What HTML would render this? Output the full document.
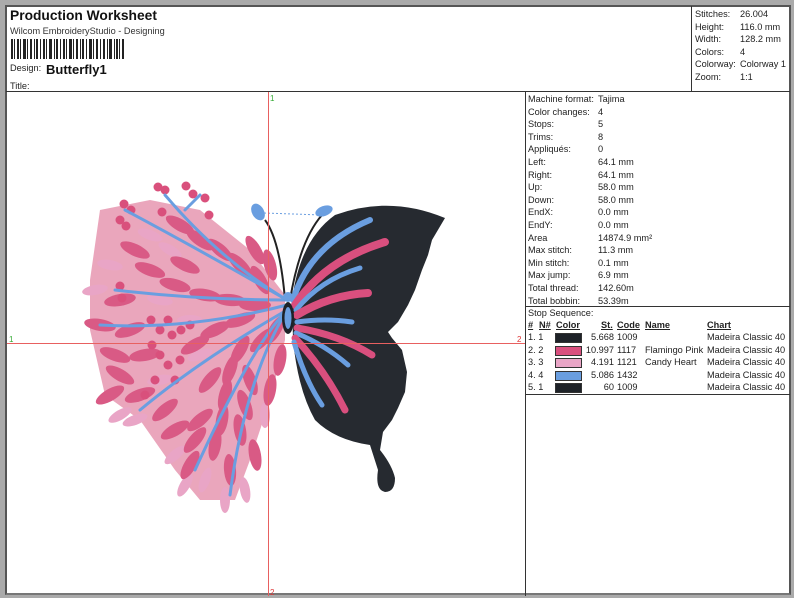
<!DOCTYPE html>
<html><head><meta charset="utf-8"><style>
*{margin:0;padding:0;box-sizing:border-box}
body{width:794px;height:598px;background:#aaa;position:relative;overflow:hidden;font-family:"Liberation Sans",Arial,sans-serif;color:#222}
.page{position:absolute;left:5px;top:5px;width:786px;height:590px;background:#fff;border:2px solid #555;border-bottom:2px solid #777}
.a{position:absolute;white-space:nowrap}
.s{font-size:9.2px;line-height:12.6px}
.ln{position:absolute;background:#333}
</style></head><body>
<div class="page"></div>
<div class="a" style="left:10px;top:8px;font-size:13.8px;font-weight:bold;color:#111">Production Worksheet</div>
<div class="a s" style="left:10px;top:25px;color:#333">Wilcom EmbroideryStudio - Designing</div>
<svg class="a" style="left:11px;top:39px" width="118" height="20">
<g fill="#222">
<rect x="0" width="2" height="20"/><rect x="3" width="1" height="20"/><rect x="6" width="2" height="20"/><rect x="9" width="1" height="20"/><rect x="12" width="3" height="20"/><rect x="16" width="1" height="20"/><rect x="19" width="2" height="20"/><rect x="23" width="1" height="20"/><rect x="25" width="2" height="20"/><rect x="29" width="1" height="20"/><rect x="32" width="2" height="20"/><rect x="35" width="1" height="20"/><rect x="38" width="3" height="20"/><rect x="43" width="1" height="20"/><rect x="45" width="2" height="20"/><rect x="49" width="1" height="20"/><rect x="52" width="2" height="20"/><rect x="55" width="1" height="20"/><rect x="58" width="3" height="20"/><rect x="62" width="1" height="20"/><rect x="65" width="2" height="20"/><rect x="69" width="1" height="20"/><rect x="71" width="2" height="20"/><rect x="75" width="1" height="20"/><rect x="78" width="3" height="20"/><rect x="82" width="1" height="20"/><rect x="85" width="2" height="20"/><rect x="89" width="1" height="20"/><rect x="92" width="2" height="20"/><rect x="96" width="1" height="20"/><rect x="98" width="3" height="20"/><rect x="103" width="1" height="20"/><rect x="105" width="2" height="20"/><rect x="108" width="1" height="20"/><rect x="111" width="2" height="20"/></g></svg>
<div class="a s" style="left:10px;top:62px">Design:</div>
<div class="a" style="left:46px;top:62px;font-size:13px;font-weight:bold;color:#111">Butterfly1</div>
<div class="a s" style="left:10px;top:80px">Title:</div>
<div class="ln" style="left:6px;top:91px;width:784px;height:1px"></div>
<div class="ln" style="left:691px;top:6px;width:1px;height:86px"></div>
<div class="ln" style="left:525px;top:92px;width:1px;height:504px"></div>
<div class="ln" style="left:525px;top:306px;width:265px;height:1px"></div>
<div class="ln" style="left:525px;top:394px;width:265px;height:1px"></div>
<div class="a s" style="left:695px;top:8px">Stitches:<br>Height:<br>Width:<br>Colors:<br>Colorway:<br>Zoom:</div>
<div class="a s" style="left:740px;top:8px">26.004<br>116.0 mm<br>128.2 mm<br>4<br>Colorway 1<br>1:1</div>
<div class="a s" style="left:528px;top:93px">Machine format:<br>Color changes:<br>Stops:<br>Trims:<br>Appliqués:<br>Left:<br>Right:<br>Up:<br>Down:<br>EndX:<br>EndY:<br>Area<br>Max stitch:<br>Min stitch:<br>Max jump:<br>Total thread:<br>Total bobbin:</div>
<div class="a s" style="left:598px;top:93px">Tajima<br>4<br>5<br>8<br>0<br>64.1 mm<br>64.1 mm<br>58.0 mm<br>58.0 mm<br>0.0 mm<br>0.0 mm<br>14874.9 mm²<br>11.3 mm<br>0.1 mm<br>6.9 mm<br>142.60m<br>53.39m</div>
<div class="a s" style="left:528px;top:307px">Stop Sequence:</div>
<div class="a s" style="left:528px;top:319px;font-weight:bold;text-decoration:underline">#</div>
<div class="a s" style="left:539px;top:319px;font-weight:bold;text-decoration:underline">N#</div>
<div class="a s" style="left:556px;top:319px;font-weight:bold;text-decoration:underline">Color</div>
<div class="a s" style="left:601px;top:319px;font-weight:bold;text-decoration:underline">St.</div>
<div class="a s" style="left:617px;top:319px;font-weight:bold;text-decoration:underline">Code</div>
<div class="a s" style="left:645px;top:319px;font-weight:bold;text-decoration:underline">Name</div>
<div class="a s" style="left:707px;top:319px;font-weight:bold;text-decoration:underline">Chart</div>
<div class="a s" style="left:528px;top:331px">1. 1<br>2. 2<br>3. 3<br>4. 4<br>5. 1</div>
<div class="a" style="left:555px;top:333px;width:27px;height:10px;background:#1e2228;border:1px solid #333"></div>
<div class="a" style="left:555px;top:346px;width:27px;height:10px;background:#d94f7e;border:1px solid #333"></div>
<div class="a" style="left:555px;top:358px;width:27px;height:10px;background:#e9a5c6;border:1px solid #333"></div>
<div class="a" style="left:555px;top:371px;width:27px;height:10px;background:#6a9ee0;border:1px solid #333"></div>
<div class="a" style="left:555px;top:383px;width:27px;height:10px;background:#1e2228;border:1px solid #333"></div>
<div class="a s" style="left:583px;top:331px;width:31px;text-align:right">5.668<br>10.997<br>4.191<br>5.086<br>60</div>
<div class="a s" style="left:617px;top:331px">1009<br>1117<br>1121<br>1432<br>1009</div>
<div class="a s" style="left:645px;top:331px"><br>Flamingo Pink<br>Candy Heart</div>
<div class="a s" style="left:707px;top:331px">Madeira Classic 40<br>Madeira Classic 40<br>Madeira Classic 40<br>Madeira Classic 40<br>Madeira Classic 40</div>

<svg class="a" style="left:0;top:0" width="794" height="598">
<defs>
<ellipse id="lf" cx="0" cy="0" rx="16" ry="6"/>
<ellipse id="ls" cx="0" cy="0" rx="13" ry="5"/>
</defs>
<path fill="#dc6a90" opacity="0.6" d="M100 210 L150 200 L200 210 L250 250 L285 295 L285 340 L270 400 L250 460 L235 500 L200 500 L175 470 L140 420 L105 395 L90 330 L90 280 Z"/>
<g fill="#e9a5c6">
<use href="#ls" transform="translate(150,235) rotate(20)"/><use href="#ls" transform="translate(110,265) rotate(10)"/><use href="#ls" transform="translate(95,290) rotate(-10)"/><use href="#ls" transform="translate(170,250) rotate(30)"/>
<use href="#ls" transform="translate(200,355) rotate(-20)"/><use href="#ls" transform="translate(120,415) rotate(-30)"/><use href="#ls" transform="translate(160,380) rotate(-10)"/>
<use href="#ls" transform="translate(205,480) rotate(-70)"/><use href="#ls" transform="translate(185,485) rotate(-60)"/><use href="#ls" transform="translate(245,490) rotate(-100)"/><use href="#ls" transform="translate(225,500) rotate(-90)"/>
<use href="#ls" transform="translate(175,455) rotate(-40)"/><use href="#ls" transform="translate(265,415) rotate(-90)"/><use href="#ls" transform="translate(190,320) rotate(0)"/>
<use href="#ls" transform="translate(135,420) rotate(-20)"/><use href="#ls" transform="translate(215,250) rotate(40)"/><use href="#ls" transform="translate(160,300) rotate(10)"/>
</g>
<g fill="#d95a85">
<use href="#lf" transform="translate(180,225) rotate(30)"/><use href="#lf" transform="translate(200,240) rotate(35)"/><use href="#lf" transform="translate(220,250) rotate(40)"/><use href="#lf" transform="translate(240,265) rotate(45)"/>
<use href="#lf" transform="translate(150,270) rotate(20)"/><use href="#lf" transform="translate(175,285) rotate(15)"/><use href="#lf" transform="translate(205,295) rotate(10)"/><use href="#lf" transform="translate(230,300) rotate(5)"/><use href="#lf" transform="translate(255,305) rotate(0)"/>
<use href="#lf" transform="translate(120,300) rotate(-10)"/><use href="#lf" transform="translate(100,325) rotate(10)"/><use href="#lf" transform="translate(130,330) rotate(-20)"/>
<use href="#lf" transform="translate(215,330) rotate(-25)"/><use href="#lf" transform="translate(240,320) rotate(-20)"/><use href="#lf" transform="translate(195,345) rotate(-30)"/>
<use href="#lf" transform="translate(240,350) rotate(-60)"/><use href="#lf" transform="translate(230,370) rotate(-70)"/><use href="#lf" transform="translate(225,395) rotate(-75)"/><use href="#lf" transform="translate(222,420) rotate(-80)"/><use href="#lf" transform="translate(215,445) rotate(-80)"/>
<use href="#lf" transform="translate(250,380) rotate(-110)"/><use href="#lf" transform="translate(245,405) rotate(-110)"/><use href="#lf" transform="translate(240,430) rotate(-100)"/><use href="#lf" transform="translate(230,470) rotate(-95)"/>
<use href="#lf" transform="translate(200,420) rotate(-40)"/><use href="#lf" transform="translate(195,440) rotate(-50)"/><use href="#lf" transform="translate(190,465) rotate(-60)"/><use href="#lf" transform="translate(175,430) rotate(-30)"/>
<use href="#lf" transform="translate(120,375) rotate(30)"/><use href="#lf" transform="translate(140,395) rotate(-20)"/><use href="#lf" transform="translate(110,395) rotate(-30)"/><use href="#lf" transform="translate(165,410) rotate(-40)"/>
<use href="#lf" transform="translate(260,280) rotate(60)"/><use href="#lf" transform="translate(270,265) rotate(75)"/><use href="#lf" transform="translate(255,250) rotate(60)"/><use href="#lf" transform="translate(275,330) rotate(-60)"/><use href="#lf" transform="translate(262,340) rotate(-45)"/>
<use href="#lf" transform="translate(280,360) rotate(-80)"/><use href="#lf" transform="translate(270,390) rotate(-80)"/>
<use href="#lf" transform="translate(145,355) rotate(-10)"/><use href="#lf" transform="translate(115,355) rotate(20)"/><use href="#lf" transform="translate(255,455) rotate(-100)"/><use href="#lf" transform="translate(210,380) rotate(-50)"/>
<use href="#lf" transform="translate(185,265) rotate(25)"/><use href="#lf" transform="translate(135,250) rotate(25)"/>
</g>
<g fill="#d9507c">
<circle cx="158" cy="187" r="4.5"/><circle cx="165" cy="190" r="4.5"/><circle cx="186" cy="186" r="4.5"/><circle cx="193" cy="194" r="4.5"/><circle cx="205" cy="198" r="4.5"/><circle cx="209" cy="215" r="4.5"/><circle cx="162" cy="212" r="4.5"/><circle cx="124" cy="204" r="4.5"/><circle cx="131" cy="210" r="4.5"/><circle cx="120" cy="220" r="4.5"/><circle cx="126" cy="226" r="4.5"/>
<circle cx="120" cy="286" r="4.5"/><circle cx="122" cy="298" r="4.5"/><circle cx="151" cy="320" r="4.5"/><circle cx="160" cy="330" r="4.5"/><circle cx="168" cy="320" r="4.5"/><circle cx="172" cy="335" r="4.5"/><circle cx="181" cy="330" r="4.5"/><circle cx="190" cy="325" r="4.5"/>
<circle cx="152" cy="345" r="4.5"/><circle cx="160" cy="355" r="4.5"/><circle cx="168" cy="365" r="4.5"/><circle cx="180" cy="360" r="4.5"/><circle cx="175" cy="380" r="4.5"/><circle cx="155" cy="380" r="4.5"/><circle cx="145" cy="395" r="4.5"/>
</g>
<g stroke="#6a9ee0" stroke-width="3" fill="none" stroke-linecap="round">
<path d="M287 300 Q220 260 165 195"/><path d="M287 300 Q200 250 125 210"/><path d="M287 300 Q200 300 115 290"/><path d="M287 305 Q190 330 100 325"/>
<path d="M287 310 Q200 360 140 410"/><path d="M287 310 Q245 380 230 495"/><path d="M285 312 Q250 350 195 470"/><path d="M185 210 L200 195"/>
</g>
<path fill="#262a30" d="M292 300 Q300 240 335 215 Q390 195 445 218 L432 240 L428 255 L422 270 L415 290 L408 305 L398 322 L388 332 L392 338 L402 350 L407 372 L405 392 L398 408 L392 420 L383 432 L380 450 Q392 465 395 478 Q395 492 385 492 Q375 490 378 470 L370 445 Q335 440 315 420 Q298 390 293 340 Z"/>
<g fill="none" stroke-linecap="round">
<path d="M293 300 Q310 245 370 220" stroke="#6a9ee0" stroke-width="6"/>
<path d="M295 305 Q325 260 385 242" stroke="#d94f7e" stroke-width="8"/>
<path d="M296 310 Q320 280 360 268" stroke="#6a9ee0" stroke-width="5"/>
<path d="M297 315 Q330 295 368 293" stroke="#d94f7e" stroke-width="8"/>
<path d="M297 322 Q325 318 352 322" stroke="#6a9ee0" stroke-width="5"/>
<path d="M297 328 Q340 335 372 355" stroke="#d94f7e" stroke-width="7"/>
<path d="M296 333 Q325 345 348 365" stroke="#6a9ee0" stroke-width="5"/>
<path d="M295 338 Q325 370 345 410" stroke="#d94f7e" stroke-width="7"/>
<path d="M294 342 Q305 380 322 405" stroke="#6a9ee0" stroke-width="5"/>
</g>
<path d="M285 300 Q280 240 265 220 M290 300 Q300 240 322 215" stroke="#222" stroke-width="2" fill="none"/>
<ellipse cx="258" cy="212" rx="6" ry="9" fill="#6a9ee0" transform="rotate(-30 258 212)"/>
<ellipse cx="324" cy="211" rx="9" ry="5" fill="#6a9ee0" transform="rotate(-20 324 211)"/>
<path d="M264 213 L322 215" stroke="#6a9ee0" stroke-dasharray="2 2" fill="none"/>
<ellipse cx="288" cy="318" rx="6" ry="16" fill="#1e2228"/>
<ellipse cx="288" cy="318" rx="3.5" ry="11" fill="#6a9ee0"/>
<circle cx="288" cy="297" r="5" fill="#6a9ee0"/>
<line x1="268.5" y1="92" x2="268.5" y2="596" stroke="#e86060" stroke-width="1"/>
<line x1="7" y1="343.5" x2="525" y2="343.5" stroke="#e86060" stroke-width="1"/>
<text x="270" y="101" font-size="8" fill="#3a3" font-family="Liberation Sans">1</text>
<text x="9" y="342" font-size="8" fill="#3a3" font-family="Liberation Sans">1</text>
<text x="517" y="342" font-size="8" fill="#d33" font-family="Liberation Sans">2</text>
<text x="270" y="595" font-size="8" fill="#d33" font-family="Liberation Sans">2</text>
</svg>
</body></html>
